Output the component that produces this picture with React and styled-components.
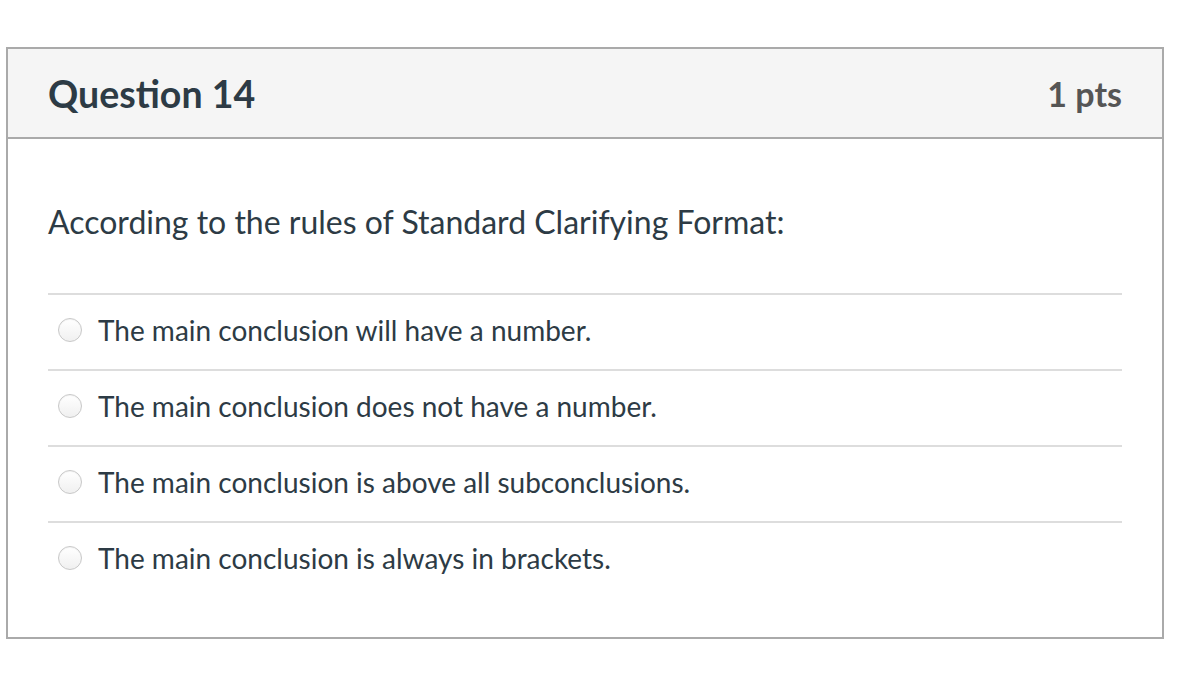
import React from "react";
import styled, { createGlobalStyle } from "styled-components";

const GlobalStyle = createGlobalStyle`
  html, body {
    margin: 0;
    padding: 0;
    background: #fff;
  }
  body {
    font-family: Lato, "Noto Sans", "Liberation Sans", sans-serif;
    color: #2d3b45;
  }
`;

const Page = styled.div`
  padding: 47px 24px 0 6px;
`;

const Card = styled.div`
  border: 2px solid #aaaaaa;
  width: 1154px;
  background: #fff;
`;

const Header = styled.div`
  display: flex;
  justify-content: space-between;
  align-items: center;
  height: 88px;
  padding: 0 40px;
  background: #f5f5f5;
  border-bottom: 2px solid #aaaaaa;
`;

const Title = styled.h2`
  margin: 0;
  font-size: 37.5px;
  font-weight: 700;
  color: #2d3b45;
`;

const Points = styled.div`
  font-size: 34px;
  font-weight: 700;
  color: #555555;
`;

const Body = styled.div`
  padding: 64px 40px 40px;
`;

const Prompt = styled.p`
  margin: 0 0 52px;
  font-size: 32px;
  line-height: 38px;
`;

const Answer = styled.label`
  box-sizing: border-box;
  display: flex;
  align-items: center;
  gap: 16px;
  height: 76px;
  padding: 0 0 5px 10px;
  border-top: 2px solid #dddddd;
  font-size: 28px;
  line-height: 34px;
  cursor: pointer;
`;

const Radio = styled.span`
  width: 22px;
  height: 22px;
  border-radius: 50%;
  border: 1px solid #c8c8c8;
  background: linear-gradient(#ffffff, #f0f0f0);
  box-shadow: inset 0 1px 1px rgba(0, 0, 0, 0.05);
  flex-shrink: 0;
`;

const answers = [
  "The main conclusion will have a number.",
  "The main conclusion does not have a number.",
  "The main conclusion is above all subconclusions.",
  "The main conclusion is always in brackets.",
];

export default function App() {
  return (
    <>
      <GlobalStyle />
      <Page>
        <Card>
          <Header>
            <Title>Question 14</Title>
            <Points>1 pts</Points>
          </Header>
          <Body>
            <Prompt>According to the rules of Standard Clarifying Format:</Prompt>
            {answers.map((a) => (
              <Answer key={a}>
                <Radio />
                {a}
              </Answer>
            ))}
          </Body>
        </Card>
      </Page>
    </>
  );
}
